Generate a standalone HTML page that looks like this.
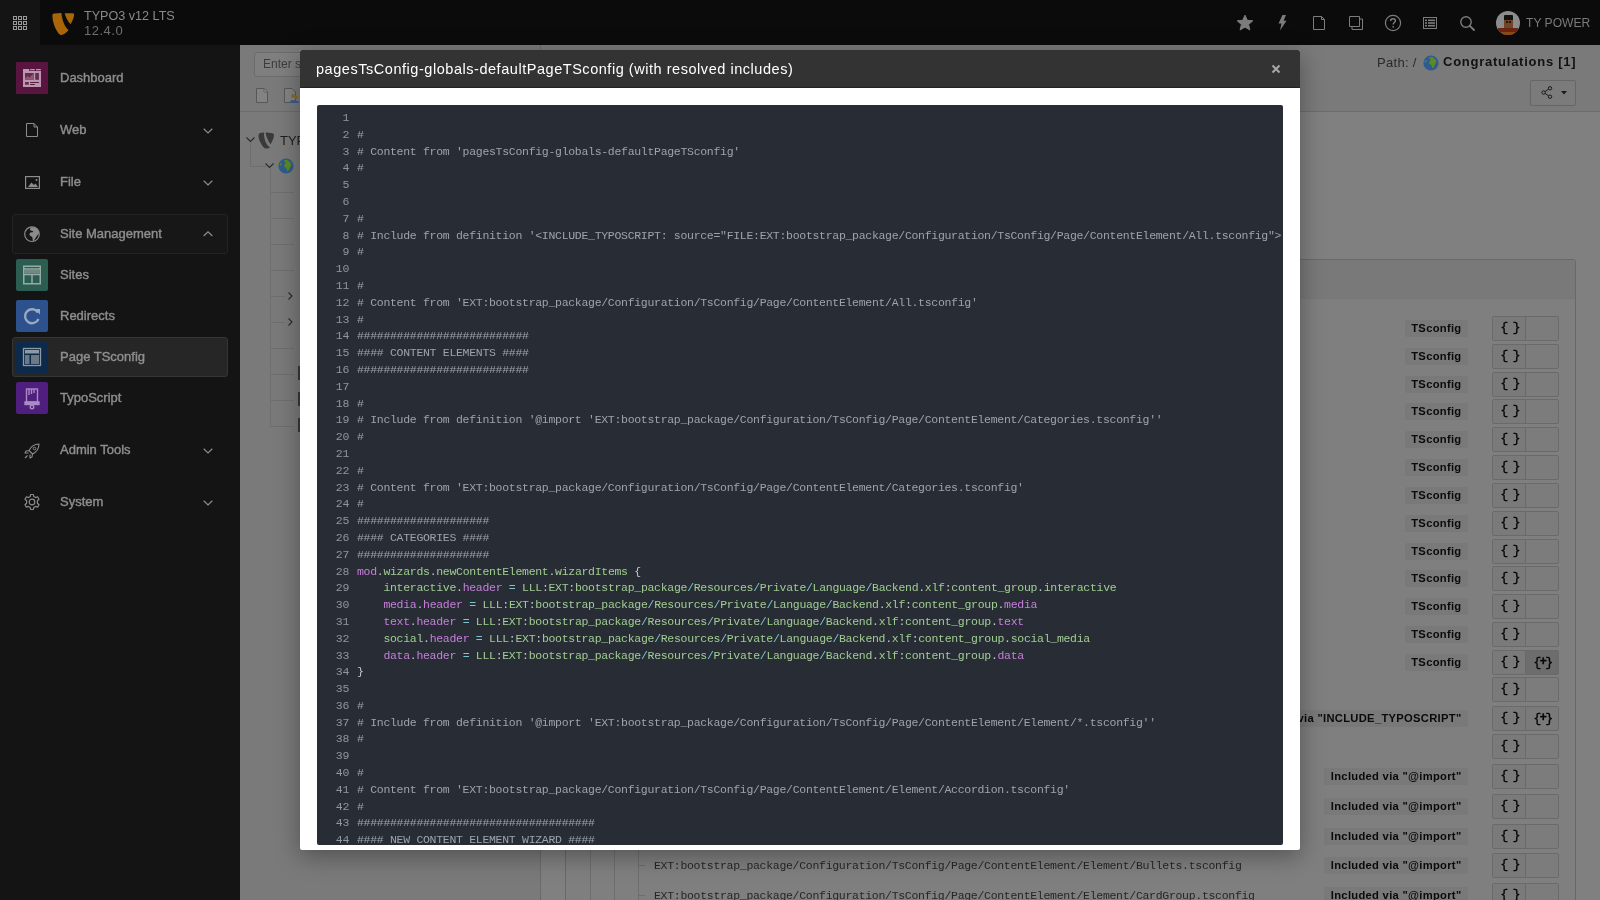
<!DOCTYPE html><html><head><meta charset="utf-8"><style>
*{box-sizing:border-box;margin:0;padding:0}
html,body{width:1600px;height:900px;overflow:hidden;font-family:"Liberation Sans",sans-serif;background:#808080}
.abs{position:absolute}
#topbar{position:absolute;left:0;top:0;width:1600px;height:45px;background:#0b0b0b}
#tb-toggle{position:absolute;left:0;top:0;width:40px;height:45px;background:#141414}
#sidebar{position:absolute;left:0;top:45px;width:240px;height:855px;background:#141414}
#content{position:absolute;left:240px;top:45px;width:1360px;height:855px;background:#808080;overflow:hidden}
.side-t{position:absolute;left:60px;margin-top:1px;color:#8e8e8e;font-size:13px;font-weight:normal;-webkit-text-stroke:0.4px #8e8e8e;white-space:nowrap;margin-top:0px}
.chev{position:absolute;left:203px;width:9px;height:5px}
.micon{position:absolute;left:16px;width:32px;height:32px;border-radius:2px}
#modal{position:absolute;left:300px;top:50px;width:1000px;height:800px;background:#fff;border-radius:2px;box-shadow:0 6px 24px rgba(0,0,0,.35);overflow:hidden}
#mhead{position:absolute;left:0;top:0;width:1000px;height:38px;background:#333;border-bottom:1px solid #222}
#mtitle{position:absolute;left:16px;top:11px;color:#fff;font-size:14.5px;letter-spacing:0.54px;white-space:nowrap}
#code{position:absolute;left:17px;top:55px;width:966px;height:740px;background:#282c34;border-radius:2px;overflow:hidden}
#code pre{position:absolute;left:0;top:5px;will-change:transform;font-family:"Liberation Mono",monospace;font-size:11.5px;letter-spacing:-0.3px;line-height:16.8px;color:#9ca3ae;white-space:pre}
.ln{display:inline-block;width:32px;text-align:right;color:#8f96a0;margin-right:8px;letter-spacing:-0.3px}
.k{color:#c77fdc}.g{color:#a0cd92}.c{color:#7cc6cf}.p{color:#c3c8d0}
</style></head><body><div id="root" style="position:absolute;left:0;top:0;width:1600px;height:900px;will-change:transform"><div id="topbar"><div id="tb-toggle"></div><svg class="abs" style="left:0;top:0" width="40" height="45"><rect x="13.5" y="16.5" width="3" height="3" fill="none" stroke="#999" stroke-width="1"/><rect x="18.5" y="16.5" width="3" height="3" fill="none" stroke="#999" stroke-width="1"/><rect x="23.5" y="16.5" width="3" height="3" fill="none" stroke="#999" stroke-width="1"/><rect x="13.5" y="21.5" width="3" height="3" fill="none" stroke="#999" stroke-width="1"/><rect x="18.5" y="21.5" width="3" height="3" fill="none" stroke="#999" stroke-width="1"/><rect x="23.5" y="21.5" width="3" height="3" fill="none" stroke="#999" stroke-width="1"/><rect x="13.5" y="26.5" width="3" height="3" fill="none" stroke="#999" stroke-width="1"/><rect x="18.5" y="26.5" width="3" height="3" fill="none" stroke="#999" stroke-width="1"/><rect x="23.5" y="26.5" width="3" height="3" fill="none" stroke="#999" stroke-width="1"/></svg><svg class="abs" style="left:50px;top:11px" width="26" height="26" viewBox="0 0 26 26"><path d="M2.4 4.2 C2.4 3 3 2.6 4.2 2.5 L11.4 2 C12 8.5 14.2 15 18.5 19.3 C16.4 21.8 13.6 24 11.4 24 C8 24 2.3 13 2.4 4.2 Z M14.4 2 L22.8 2.3 C23.8 2.4 24.1 2.9 24.1 3.8 C24.1 6.6 22.2 10.6 20.6 13.2 C17.2 9.6 15.3 5.2 14.6 2 Z" fill="#a86609"/></svg><div class="abs" style="left:84px;top:9px;color:#8a8a8a;font-size:12.6px;white-space:nowrap">TYPO3 v12 LTS</div><div class="abs" style="left:84px;top:23px;color:#6e6e6e;font-size:13px;letter-spacing:0.5px;white-space:nowrap">12.4.0</div><svg class="abs" style="left:1236px;top:14px" width="18" height="18" viewBox="0 0 18 18"><path d="M9 1.2 L11.3 6.3 L16.8 6.8 L12.6 10.5 L13.9 16 L9 13.1 L4.1 16 L5.4 10.5 L1.2 6.8 L6.7 6.3 Z" fill="#7c7c7c" stroke="#7c7c7c" stroke-width="1" stroke-linejoin="round"/></svg><svg class="abs" style="left:1275px;top:14px" width="14" height="18" viewBox="0 0 14 18"><path d="M7.5 1 L11 1 L8.6 6.8 L11.5 6.8 L5 16.5 L6.5 9.5 L3.5 9.5 Z" fill="#7c7c7c"/></svg><svg class="abs" style="left:1312px;top:15px" width="14" height="16" viewBox="0 0 14 16"><path d="M1.5 1.5 H9.5 L12.5 4.5 V14.5 H1.5 Z M9.5 1.5 V4.5 H12.5" fill="none" stroke="#7c7c7c" stroke-width="1"/></svg><svg class="abs" style="left:1348px;top:15px" width="16" height="16" viewBox="0 0 16 16"><path d="M1.5 1.5 H11.5 V11.5 H1.5 Z M4 11.5 V14.5 H14.5 V4 H11.5" fill="none" stroke="#7c7c7c" stroke-width="1"/><path d="M2.5 1.5 V2" stroke="#7c7c7c"/></svg><svg class="abs" style="left:1384px;top:14px" width="18" height="18" viewBox="0 0 18 18"><circle cx="9" cy="9" r="7.6" fill="none" stroke="#7c7c7c" stroke-width="1.2"/><path d="M6.6 7 C6.6 5.5 7.6 4.7 9 4.7 C10.5 4.7 11.4 5.6 11.4 6.8 C11.4 8.4 9.2 8.6 9.2 10.4" fill="none" stroke="#7c7c7c" stroke-width="1.5"/><circle cx="9.2" cy="12.8" r="0.9" fill="#7c7c7c"/></svg><svg class="abs" style="left:1422px;top:16px" width="16" height="14" viewBox="0 0 16 14"><rect x="1.5" y="1.5" width="13" height="11" fill="none" stroke="#7c7c7c" stroke-width="1"/><rect x="3" y="3.5" width="2" height="1.6" fill="#7c7c7c"/><rect x="6" y="3.5" width="7" height="1.6" fill="#7c7c7c"/><rect x="3" y="6.2" width="2" height="1.6" fill="#7c7c7c"/><rect x="6" y="6.2" width="7" height="1.6" fill="#7c7c7c"/><rect x="3" y="8.9" width="2" height="1.6" fill="#7c7c7c"/><rect x="6" y="8.9" width="7" height="1.6" fill="#7c7c7c"/></svg><svg class="abs" style="left:1459px;top:15px" width="17" height="17" viewBox="0 0 17 17"><circle cx="7" cy="7" r="5.2" fill="none" stroke="#7c7c7c" stroke-width="1.4"/><path d="M10.8 10.8 L15 15" stroke="#7c7c7c" stroke-width="1.8" stroke-linecap="round"/></svg><div class="abs" style="left:1496px;top:11px;width:24px;height:24px;border-radius:50%;background:#8c8c8c;overflow:hidden"><div class="abs" style="left:7.5px;top:8px;width:9px;height:11px;background:#6e4526"></div><div class="abs" style="left:7.5px;top:3.5px;width:9px;height:5px;background:#101010;border-radius:1px 1px 0 0"></div><div class="abs" style="left:9.5px;top:10px;width:2px;height:1.5px;background:#2a120a"></div><div class="abs" style="left:12.5px;top:10px;width:2px;height:1.5px;background:#2a120a"></div><div class="abs" style="left:2px;top:17px;width:20px;height:8px;background:#6a2410"></div><div class="abs" style="left:4px;top:21px;width:16px;height:4px;background:#8a4a18"></div></div><div class="abs" style="left:1526px;top:16px;color:#7a7a7a;font-size:12.1px;white-space:nowrap">TY POWER</div></div><div id="sidebar"><div class="micon" style="top:17px;background:#5a1440;border-radius:1px"><svg width="32" height="32" viewBox="0 0 32 32"><path d="M7 7 H13.2 V9 H25 V25 H7 Z" fill="#b89ab0"/><rect x="14.2" y="7" width="4.6" height="1.3" fill="#b89ab0"/><rect x="20" y="7" width="4.8" height="1.3" fill="#b89ab0"/><rect x="9" y="11" width="8.7" height="6.8" fill="#6a2a50"/><path d="M9 16.5 L11.5 14 L13.5 15.5 L17.2 12 V17.8 H9Z" fill="#8a5a78"/><rect x="19.2" y="11" width="3.7" height="6.8" fill="#6a2a50"/><rect x="9" y="20" width="3.8" height="2.7" fill="#6a2a50"/><rect x="14.2" y="20" width="8.7" height="1" fill="#5a1a40"/><rect x="14.2" y="22" width="4.6" height="1" fill="#5a1a40"/></svg></div><div class="side-t" style="top:25px">Dashboard</div><svg class="abs" style="left:25px;top:77px" width="14" height="16" viewBox="0 0 14 16"><path d="M1.5 1.5 H9 L12.5 5 V14.5 H1.5 Z M9 1.5 V5 H12.5" fill="none" stroke="#8c8c8c" stroke-width="1"/></svg><div class="side-t" style="top:77px">Web</div><svg class="chev" style="top:83px;width:10px;height:6px" width="10" height="6" viewBox="0 0 10 6"><path d="M0.7 0.8 L5 5 L9.3 0.8" fill="none" stroke="#8c8c8c" stroke-width="1.2"/></svg><svg class="abs" style="left:25px;top:131px" width="16" height="14" viewBox="0 0 16 14"><rect x="0.6" y="0.6" width="13.8" height="11.8" fill="none" stroke="#8c8c8c" stroke-width="1.2"/><path d="M3 11 L6.5 6.5 L9 9 L10.5 7.5 L13 11 Z" fill="#8c8c8c"/><circle cx="11.5" cy="4" r="1" fill="#8c8c8c"/></svg><div class="side-t" style="top:129px">File</div><svg class="chev" style="top:135px;width:10px;height:6px" width="10" height="6" viewBox="0 0 10 6"><path d="M0.7 0.8 L5 5 L9.3 0.8" fill="none" stroke="#8c8c8c" stroke-width="1.2"/></svg><div class="abs" style="left:12px;top:169px;width:216px;height:40px;background:#171717;border:1px solid #232323;border-radius:3px"></div><svg class="abs" style="left:24px;top:181px" width="16" height="17" viewBox="0 0 16 17"><circle cx="8" cy="8.2" r="7.3" fill="none" stroke="#8c8c8c" stroke-width="1.2"/><path d="M7.2 1.2 C9.5 1 12 1.6 13.8 3.5 C15.2 5 15.3 7 14.6 8.3 C13.5 8.8 13 10 12.2 11 C11.3 12.3 10.5 13.8 9.6 15.4 C8.8 15.2 8.6 14 8.6 12.5 C8.6 11.2 7.8 10.6 6.8 10.2 C5.8 9.8 5.2 8.8 5.6 7.6 C6 6.6 7 6.3 8 6.3 C9 6.3 9.5 5.8 9 5.2 C8.4 4.6 7 4.8 6.2 4.2 C5.6 3.6 6 2.2 7.2 1.2Z" fill="#8c8c8c"/></svg><div class="side-t" style="top:181px">Site Management</div><svg class="chev" style="top:186px;width:10px;height:6px" width="10" height="6" viewBox="0 0 10 6"><path d="M0.7 5 L5 0.8 L9.3 5" fill="none" stroke="#8c8c8c" stroke-width="1.2"/></svg><div class="micon" style="top:214px;background:#2b5e50"><svg width="32" height="32" viewBox="0 0 32 32"><g fill="none" stroke="#97aaa3" stroke-width="1.5"><rect x="7.75" y="7.25" width="16.5" height="17.5"/><path d="M7.75 10 H24.25 M7.75 15.5 H24.25 M16 15.5 V24.75"/></g><rect x="8.5" y="11" width="15" height="3.6" fill="#6f8a82"/></svg></div><div class="side-t" style="top:222px">Sites</div><div class="micon" style="top:255px;background:#2d518c"><svg width="32" height="32" viewBox="0 0 32 32"><path d="M22 12.5 A7 7 0 1 0 22.5 19" fill="none" stroke="#9aa9c2" stroke-width="2.4"/><path d="M18.5 9 L24 9 L24 14.5 Z" fill="#9aa9c2"/></svg></div><div class="side-t" style="top:263px">Redirects</div><div class="abs" style="left:12px;top:292px;width:216px;height:40px;background:#262626;border:1px solid #353535;border-radius:3px"></div><div class="micon" style="top:296px;background:#0e2a4a"><svg width="32" height="32" viewBox="0 0 32 32"><rect x="7.5" y="7.5" width="17" height="17" fill="none" stroke="#8c9aa8" stroke-width="1.3"/><rect x="9" y="9" width="14" height="3.5" fill="#8c9aa8"/><rect x="9" y="14" width="4.5" height="9" fill="#6c7a88"/><rect x="15" y="14" width="8" height="9" fill="#6c7a88"/></svg></div><div class="side-t" style="top:304px">Page TSconfig</div><div class="micon" style="top:337px;background:#4f1e7e"><svg width="32" height="32" viewBox="0 0 32 32"><g fill="none" stroke="#a98cc0" stroke-width="1.4"><rect x="10.5" y="7" width="11" height="13"/><path d="M13 7 V13 M15.5 7 V12 M18 7 V11"/><rect x="9" y="20" width="14" height="2.5" fill="#a98cc0"/><circle cx="16" cy="25" r="1.8"/></g></svg></div><div class="side-t" style="top:345px">TypoScript</div><svg class="abs" style="left:23px;top:396.5px" width="18" height="18" viewBox="0 0 18 18"><path d="M16 2 C12 2 8 4.5 6 8.5 L9.5 12 C13.5 10 16 6 16 2Z M6 8.5 L3 9 L2 11 L5.5 11 M9.5 12 L9 15 L7 16 L7 12.5 M4.5 13.5 L2 16" fill="none" stroke="#8c8c8c" stroke-width="1.1" stroke-linejoin="round"/><circle cx="11.5" cy="6.5" r="1.3" fill="none" stroke="#8c8c8c" stroke-width="1"/></svg><div class="side-t" style="top:397px">Admin Tools</div><svg class="chev" style="top:403px;width:10px;height:6px" width="10" height="6" viewBox="0 0 10 6"><path d="M0.7 0.8 L5 5 L9.3 0.8" fill="none" stroke="#8c8c8c" stroke-width="1.2"/></svg><svg class="abs" style="left:23px;top:448px" width="18" height="18" viewBox="0 0 18 18"><circle cx="9" cy="9" r="2.8" fill="none" stroke="#8c8c8c" stroke-width="1.2"/><path d="M7.6 1.5 H10.4 L10.8 3.6 L12.6 4.6 L14.6 3.8 L16 6.3 L14.4 7.7 V10.3 L16 11.7 L14.6 14.2 L12.6 13.4 L10.8 14.4 L10.4 16.5 H7.6 L7.2 14.4 L5.4 13.4 L3.4 14.2 L2 11.7 L3.6 10.3 V7.7 L2 6.3 L3.4 3.8 L5.4 4.6 L7.2 3.6 Z" fill="none" stroke="#8c8c8c" stroke-width="1.2" stroke-linejoin="round"/></svg><div class="side-t" style="top:449px">System</div><svg class="chev" style="top:455px;width:10px;height:6px" width="10" height="6" viewBox="0 0 10 6"><path d="M0.7 0.8 L5 5 L9.3 0.8" fill="none" stroke="#8c8c8c" stroke-width="1.2"/></svg></div><div id="content"><div class="abs" style="left:0;top:0;width:300px;height:855px;background:#7a7a7a"></div><div class="abs" style="left:0;top:0;width:1360px;height:67px;background:#7a7a7a;border-bottom:1px solid #6c6c6c"></div><div class="abs" style="left:14px;top:7px;width:200px;height:25px;background:#7f7f7f;border:1px solid #6c6c6c;border-radius:3px"></div><div class="abs" style="left:23px;top:12px;color:#3c3c3c;font-size:12px;white-space:nowrap">Enter search term</div><svg class="abs" style="left:15px;top:42px" width="14" height="17" viewBox="0 0 14 17"><path d="M1.5 1.5 H9 L12.5 5 V15.5 H1.5 Z" fill="#838383" stroke="#575757" stroke-width="1"/><path d="M9 1.5 V5 H12.5 Z" fill="#a0a0a0" stroke="#575757" stroke-width="0.8"/></svg><svg class="abs" style="left:43px;top:42px" width="17" height="17" viewBox="0 0 17 17"><path d="M1.5 1.5 H9 L12.5 5 V15.5 H1.5 Z" fill="#838383" stroke="#575757" stroke-width="1"/><circle cx="10" cy="9" r="2" fill="#8a6a2a"/><path d="M6.5 16 C6.5 12 13.5 12 13.5 16 Z" fill="#3a5f8a"/><circle cx="13" cy="10" r="1.8" fill="#8a6a2a"/><path d="M10.5 16 C10.5 13 16 13 16 16 Z" fill="#3a5f8a"/></svg><svg class="abs" style="left:6px;top:91px" width="9" height="8" viewBox="0 0 9 8"><path d="M0.5 1.5 L4.5 5.5 L8.5 1.5" fill="none" stroke="#2a2a2a" stroke-width="1.1"/></svg><svg class="abs" style="left:17px;top:86px" width="18" height="18" viewBox="0 0 18 18"><path d="M1.5 5 C1.5 2.8 2.3 2.2 4.5 1.8 L7 1.5 C6.8 5 7.5 9.5 9.7 13 C10.8 14.7 11.9 15.7 13 16.4 C11.5 17.2 10.2 17.6 9 17.6 C5.5 17.6 1.5 8.5 1.5 5Z M8.4 1.5 C9.7 1.5 13.6 1.7 15.4 2.2 C16.8 2.7 17 3.3 17 4.3 C17 6.5 15.6 10 13.6 13.3 C11.3 10.8 9.3 5.8 8.4 1.5Z" fill="#3a3a3a"/></svg><div class="abs" style="left:40px;top:88px;color:#1e1e1e;font-size:13px;white-space:nowrap">TYPO3</div><div class="abs" style="left:10px;top:98px;width:1px;height:23px;background:#6e6e6e"></div><div class="abs" style="left:10px;top:121px;width:16px;height:1px;background:#6e6e6e"></div><svg class="abs" style="left:25px;top:117px" width="9" height="8" viewBox="0 0 9 8"><path d="M0.5 1.5 L4.5 5.5 L8.5 1.5" fill="none" stroke="#2a2a2a" stroke-width="1.1"/></svg><svg class="abs" style="left:38px;top:113px" width="16" height="16" viewBox="0 0 16 16"><circle cx="8" cy="8" r="7.6" fill="#2f5c8e"/><path d="M6.5 2.2 C8.5 1.8 10.5 2.5 11 3.5 C12.3 4 13.5 5.5 13.2 7 C12.8 8.5 12 9 11.5 10.5 C11 12 10 13.5 9.2 13.2 C8.8 12 9 10.5 8 9.8 C6.8 9.2 5.8 8.5 6.2 7.2 C6.5 6 7.8 5.8 7.5 4.8 C7.2 4 6 3.2 6.5 2.2Z" fill="#5f8a1e"/><path d="M2 5.5 C3 5 3.8 5.8 3.5 6.8 C3.2 7.5 2.4 7.6 1.8 7.2Z" fill="#5f8a1e"/></svg><div class="abs" style="left:30px;top:123px;width:1px;height:259px;background:#6e6e6e"></div><div class="abs" style="left:30px;top:147px;width:24px;height:1px;background:#6e6e6e"></div><div class="abs" style="left:30px;top:173px;width:24px;height:1px;background:#6e6e6e"></div><div class="abs" style="left:30px;top:199px;width:24px;height:1px;background:#6e6e6e"></div><div class="abs" style="left:30px;top:225px;width:24px;height:1px;background:#6e6e6e"></div><svg class="abs" style="left:47px;top:247px" width="9" height="8" viewBox="0 0 9 8"><path d="M1.5 0.5 L5 4 L1.5 7.5" fill="none" stroke="#2a2a2a" stroke-width="1.1"/></svg><div class="abs" style="left:30px;top:251px;width:15px;height:1px;background:#6e6e6e"></div><svg class="abs" style="left:47px;top:273px" width="9" height="8" viewBox="0 0 9 8"><path d="M1.5 0.5 L5 4 L1.5 7.5" fill="none" stroke="#2a2a2a" stroke-width="1.1"/></svg><div class="abs" style="left:30px;top:277px;width:15px;height:1px;background:#6e6e6e"></div><div class="abs" style="left:30px;top:303px;width:24px;height:1px;background:#6e6e6e"></div><div class="abs" style="left:30px;top:329px;width:24px;height:1px;background:#6e6e6e"></div><div class="abs" style="left:30px;top:355px;width:24px;height:1px;background:#6e6e6e"></div><div class="abs" style="left:30px;top:381px;width:24px;height:1px;background:#6e6e6e"></div><div class="abs" style="left:58px;top:321px;width:2px;height:14px;background:#3a3a3a"></div><div class="abs" style="left:58px;top:347px;width:2px;height:14px;background:#3a3a3a"></div><div class="abs" style="left:58px;top:373px;width:2px;height:14px;background:#3a3a3a"></div><div class="abs" style="left:1137px;top:10px;color:#2a2a2a;font-size:13px;white-space:nowrap;letter-spacing:0.3px">Path: /</div><svg class="abs" style="left:1183px;top:10px" width="16" height="16" viewBox="0 0 16 16"><circle cx="8" cy="8" r="7.6" fill="#2f5c8e"/><path d="M6.5 2.2 C8.5 1.8 10.5 2.5 11 3.5 C12.3 4 13.5 5.5 13.2 7 C12.8 8.5 12 9 11.5 10.5 C11 12 10 13.5 9.2 13.2 C8.8 12 9 10.5 8 9.8 C6.8 9.2 5.8 8.5 6.2 7.2 C6.5 6 7.8 5.8 7.5 4.8 C7.2 4 6 3.2 6.5 2.2Z" fill="#5f8a1e"/><path d="M2 5.5 C3 5 3.8 5.8 3.5 6.8 C3.2 7.5 2.4 7.6 1.8 7.2Z" fill="#5f8a1e"/></svg><div class="abs" style="left:1203px;top:9px;color:#111;font-size:13px;font-weight:bold;white-space:nowrap;letter-spacing:0.75px">Congratulations [1]</div><div class="abs" style="left:1290px;top:35px;width:46px;height:26px;background:#7b7b7b;border:1px solid #666;border-radius:2px"></div><svg class="abs" style="left:1301px;top:41px" width="12" height="13" viewBox="0 0 12 13"><circle cx="9" cy="2.3" r="1.7" fill="none" stroke="#1a1a1a" stroke-width="1"/><circle cx="2.6" cy="6.5" r="1.7" fill="none" stroke="#1a1a1a" stroke-width="1"/><circle cx="9" cy="10.7" r="1.7" fill="none" stroke="#1a1a1a" stroke-width="1"/><path d="M4.1 5.6 L7.5 3.2 M4.1 7.4 L7.5 9.8" stroke="#1a1a1a" stroke-width="1"/></svg><svg class="abs" style="left:1321px;top:46px" width="6" height="4" viewBox="0 0 6 4"><path d="M0 0 H6 L3 3.5Z" fill="#1a1a1a"/></svg><div class="abs" style="left:300px;top:0;width:1px;height:855px;background:#6a6a6a"></div><div class="abs" style="left:325px;top:214px;width:1011px;height:700px;background:#7f7f7f;border:1px solid #686868;border-radius:3px;overflow:hidden"><div class="abs" style="left:0;top:0;width:1011px;height:39px;background:#797979;border-bottom:1px solid #777"></div></div><div class="abs" style="right:132px;top:275.0px;height:17px;padding:0 6.5px;background:#797979;border-radius:2px;color:#0a0a0a;font-size:11.2px;font-weight:bold;line-height:17px;white-space:nowrap;letter-spacing:0.3px">TSconfig</div><div class="abs" style="left:1252px;top:271.0px;width:67px;height:25px;border:1px solid #6a6a6a;border-radius:2px;background:#7c7c7c;overflow:hidden"><div class="abs" style="left:0;top:0;width:33px;height:23px;background:#7a7a7a;border-right:1px solid #6a6a6a"></div><div class="abs" style="left:0;top:0;width:33px;height:23px;text-align:center;line-height:22px;font-family:'Liberation Mono',monospace;font-size:13.5px;font-weight:normal;-webkit-text-stroke:0.3px #050505;color:#050505;letter-spacing:-2px">{ }</div></div><div class="abs" style="right:132px;top:303.0px;height:17px;padding:0 6.5px;background:#797979;border-radius:2px;color:#0a0a0a;font-size:11.2px;font-weight:bold;line-height:17px;white-space:nowrap;letter-spacing:0.3px">TSconfig</div><div class="abs" style="left:1252px;top:299.0px;width:67px;height:25px;border:1px solid #6a6a6a;border-radius:2px;background:#7c7c7c;overflow:hidden"><div class="abs" style="left:0;top:0;width:33px;height:23px;background:#7a7a7a;border-right:1px solid #6a6a6a"></div><div class="abs" style="left:0;top:0;width:33px;height:23px;text-align:center;line-height:22px;font-family:'Liberation Mono',monospace;font-size:13.5px;font-weight:normal;-webkit-text-stroke:0.3px #050505;color:#050505;letter-spacing:-2px">{ }</div></div><div class="abs" style="right:132px;top:330.5px;height:17px;padding:0 6.5px;background:#797979;border-radius:2px;color:#0a0a0a;font-size:11.2px;font-weight:bold;line-height:17px;white-space:nowrap;letter-spacing:0.3px">TSconfig</div><div class="abs" style="left:1252px;top:326.5px;width:67px;height:25px;border:1px solid #6a6a6a;border-radius:2px;background:#7c7c7c;overflow:hidden"><div class="abs" style="left:0;top:0;width:33px;height:23px;background:#7a7a7a;border-right:1px solid #6a6a6a"></div><div class="abs" style="left:0;top:0;width:33px;height:23px;text-align:center;line-height:22px;font-family:'Liberation Mono',monospace;font-size:13.5px;font-weight:normal;-webkit-text-stroke:0.3px #050505;color:#050505;letter-spacing:-2px">{ }</div></div><div class="abs" style="right:132px;top:358.3px;height:17px;padding:0 6.5px;background:#797979;border-radius:2px;color:#0a0a0a;font-size:11.2px;font-weight:bold;line-height:17px;white-space:nowrap;letter-spacing:0.3px">TSconfig</div><div class="abs" style="left:1252px;top:354.3px;width:67px;height:25px;border:1px solid #6a6a6a;border-radius:2px;background:#7c7c7c;overflow:hidden"><div class="abs" style="left:0;top:0;width:33px;height:23px;background:#7a7a7a;border-right:1px solid #6a6a6a"></div><div class="abs" style="left:0;top:0;width:33px;height:23px;text-align:center;line-height:22px;font-family:'Liberation Mono',monospace;font-size:13.5px;font-weight:normal;-webkit-text-stroke:0.3px #050505;color:#050505;letter-spacing:-2px">{ }</div></div><div class="abs" style="right:132px;top:386.3px;height:17px;padding:0 6.5px;background:#797979;border-radius:2px;color:#0a0a0a;font-size:11.2px;font-weight:bold;line-height:17px;white-space:nowrap;letter-spacing:0.3px">TSconfig</div><div class="abs" style="left:1252px;top:382.3px;width:67px;height:25px;border:1px solid #6a6a6a;border-radius:2px;background:#7c7c7c;overflow:hidden"><div class="abs" style="left:0;top:0;width:33px;height:23px;background:#7a7a7a;border-right:1px solid #6a6a6a"></div><div class="abs" style="left:0;top:0;width:33px;height:23px;text-align:center;line-height:22px;font-family:'Liberation Mono',monospace;font-size:13.5px;font-weight:normal;-webkit-text-stroke:0.3px #050505;color:#050505;letter-spacing:-2px">{ }</div></div><div class="abs" style="right:132px;top:414.0px;height:17px;padding:0 6.5px;background:#797979;border-radius:2px;color:#0a0a0a;font-size:11.2px;font-weight:bold;line-height:17px;white-space:nowrap;letter-spacing:0.3px">TSconfig</div><div class="abs" style="left:1252px;top:410.0px;width:67px;height:25px;border:1px solid #6a6a6a;border-radius:2px;background:#7c7c7c;overflow:hidden"><div class="abs" style="left:0;top:0;width:33px;height:23px;background:#7a7a7a;border-right:1px solid #6a6a6a"></div><div class="abs" style="left:0;top:0;width:33px;height:23px;text-align:center;line-height:22px;font-family:'Liberation Mono',monospace;font-size:13.5px;font-weight:normal;-webkit-text-stroke:0.3px #050505;color:#050505;letter-spacing:-2px">{ }</div></div><div class="abs" style="right:132px;top:441.8px;height:17px;padding:0 6.5px;background:#797979;border-radius:2px;color:#0a0a0a;font-size:11.2px;font-weight:bold;line-height:17px;white-space:nowrap;letter-spacing:0.3px">TSconfig</div><div class="abs" style="left:1252px;top:437.8px;width:67px;height:25px;border:1px solid #6a6a6a;border-radius:2px;background:#7c7c7c;overflow:hidden"><div class="abs" style="left:0;top:0;width:33px;height:23px;background:#7a7a7a;border-right:1px solid #6a6a6a"></div><div class="abs" style="left:0;top:0;width:33px;height:23px;text-align:center;line-height:22px;font-family:'Liberation Mono',monospace;font-size:13.5px;font-weight:normal;-webkit-text-stroke:0.3px #050505;color:#050505;letter-spacing:-2px">{ }</div></div><div class="abs" style="right:132px;top:469.9px;height:17px;padding:0 6.5px;background:#797979;border-radius:2px;color:#0a0a0a;font-size:11.2px;font-weight:bold;line-height:17px;white-space:nowrap;letter-spacing:0.3px">TSconfig</div><div class="abs" style="left:1252px;top:465.9px;width:67px;height:25px;border:1px solid #6a6a6a;border-radius:2px;background:#7c7c7c;overflow:hidden"><div class="abs" style="left:0;top:0;width:33px;height:23px;background:#7a7a7a;border-right:1px solid #6a6a6a"></div><div class="abs" style="left:0;top:0;width:33px;height:23px;text-align:center;line-height:22px;font-family:'Liberation Mono',monospace;font-size:13.5px;font-weight:normal;-webkit-text-stroke:0.3px #050505;color:#050505;letter-spacing:-2px">{ }</div></div><div class="abs" style="right:132px;top:497.6px;height:17px;padding:0 6.5px;background:#797979;border-radius:2px;color:#0a0a0a;font-size:11.2px;font-weight:bold;line-height:17px;white-space:nowrap;letter-spacing:0.3px">TSconfig</div><div class="abs" style="left:1252px;top:493.6px;width:67px;height:25px;border:1px solid #6a6a6a;border-radius:2px;background:#7c7c7c;overflow:hidden"><div class="abs" style="left:0;top:0;width:33px;height:23px;background:#7a7a7a;border-right:1px solid #6a6a6a"></div><div class="abs" style="left:0;top:0;width:33px;height:23px;text-align:center;line-height:22px;font-family:'Liberation Mono',monospace;font-size:13.5px;font-weight:normal;-webkit-text-stroke:0.3px #050505;color:#050505;letter-spacing:-2px">{ }</div></div><div class="abs" style="right:132px;top:525.4px;height:17px;padding:0 6.5px;background:#797979;border-radius:2px;color:#0a0a0a;font-size:11.2px;font-weight:bold;line-height:17px;white-space:nowrap;letter-spacing:0.3px">TSconfig</div><div class="abs" style="left:1252px;top:521.4px;width:67px;height:25px;border:1px solid #6a6a6a;border-radius:2px;background:#7c7c7c;overflow:hidden"><div class="abs" style="left:0;top:0;width:33px;height:23px;background:#7a7a7a;border-right:1px solid #6a6a6a"></div><div class="abs" style="left:0;top:0;width:33px;height:23px;text-align:center;line-height:22px;font-family:'Liberation Mono',monospace;font-size:13.5px;font-weight:normal;-webkit-text-stroke:0.3px #050505;color:#050505;letter-spacing:-2px">{ }</div></div><div class="abs" style="right:132px;top:553.0px;height:17px;padding:0 6.5px;background:#797979;border-radius:2px;color:#0a0a0a;font-size:11.2px;font-weight:bold;line-height:17px;white-space:nowrap;letter-spacing:0.3px">TSconfig</div><div class="abs" style="left:1252px;top:549.0px;width:67px;height:25px;border:1px solid #6a6a6a;border-radius:2px;background:#7c7c7c;overflow:hidden"><div class="abs" style="left:0;top:0;width:33px;height:23px;background:#7a7a7a;border-right:1px solid #6a6a6a"></div><div class="abs" style="left:0;top:0;width:33px;height:23px;text-align:center;line-height:22px;font-family:'Liberation Mono',monospace;font-size:13.5px;font-weight:normal;-webkit-text-stroke:0.3px #050505;color:#050505;letter-spacing:-2px">{ }</div></div><div class="abs" style="right:132px;top:580.6px;height:17px;padding:0 6.5px;background:#797979;border-radius:2px;color:#0a0a0a;font-size:11.2px;font-weight:bold;line-height:17px;white-space:nowrap;letter-spacing:0.3px">TSconfig</div><div class="abs" style="left:1252px;top:576.6px;width:67px;height:25px;border:1px solid #6a6a6a;border-radius:2px;background:#7c7c7c;overflow:hidden"><div class="abs" style="left:0;top:0;width:33px;height:23px;background:#7a7a7a;border-right:1px solid #6a6a6a"></div><div class="abs" style="left:0;top:0;width:33px;height:23px;text-align:center;line-height:22px;font-family:'Liberation Mono',monospace;font-size:13.5px;font-weight:normal;-webkit-text-stroke:0.3px #050505;color:#050505;letter-spacing:-2px">{ }</div></div><div class="abs" style="right:132px;top:608.5px;height:17px;padding:0 6.5px;background:#797979;border-radius:2px;color:#0a0a0a;font-size:11.2px;font-weight:bold;line-height:17px;white-space:nowrap;letter-spacing:0.3px">TSconfig</div><div class="abs" style="left:1252px;top:604.5px;width:67px;height:25px;border:1px solid #6a6a6a;border-radius:2px;background:#7c7c7c;overflow:hidden"><div class="abs" style="left:0;top:0;width:33px;height:23px;background:#7a7a7a;border-right:1px solid #6a6a6a"></div><div class="abs" style="left:0;top:0;width:33px;height:23px;text-align:center;line-height:22px;font-family:'Liberation Mono',monospace;font-size:13.5px;font-weight:normal;-webkit-text-stroke:0.3px #050505;color:#050505;letter-spacing:-2px">{ }</div><div class="abs" style="left:33px;top:0;width:33px;height:23px;background:#6d6d6d;text-align:center;line-height:22px;font-family:'Liberation Mono',monospace;font-size:13.5px;font-weight:normal;-webkit-text-stroke:0.3px #050505;color:#050505;letter-spacing:-1.5px">{<b style="font-family:'Liberation Sans',sans-serif;font-size:12px;position:relative;top:-1px">+</b>}</div></div><div class="abs" style="left:1252px;top:632.4px;width:67px;height:25px;border:1px solid #6a6a6a;border-radius:2px;background:#7c7c7c;overflow:hidden"><div class="abs" style="left:0;top:0;width:33px;height:23px;background:#7a7a7a;border-right:1px solid #6a6a6a"></div><div class="abs" style="left:0;top:0;width:33px;height:23px;text-align:center;line-height:22px;font-family:'Liberation Mono',monospace;font-size:13.5px;font-weight:normal;-webkit-text-stroke:0.3px #050505;color:#050505;letter-spacing:-2px">{ }</div></div><div class="abs" style="right:132px;top:665.0px;height:17px;padding:0 6.5px;background:#797979;border-radius:2px;color:#0a0a0a;font-size:11.2px;font-weight:bold;line-height:17px;white-space:nowrap;letter-spacing:0.3px">Included via &quot;INCLUDE_TYPOSCRIPT&quot;</div><div class="abs" style="left:1252px;top:661.0px;width:67px;height:25px;border:1px solid #6a6a6a;border-radius:2px;background:#7c7c7c;overflow:hidden"><div class="abs" style="left:0;top:0;width:33px;height:23px;background:#7a7a7a;border-right:1px solid #6a6a6a"></div><div class="abs" style="left:0;top:0;width:33px;height:23px;text-align:center;line-height:22px;font-family:'Liberation Mono',monospace;font-size:13.5px;font-weight:normal;-webkit-text-stroke:0.3px #050505;color:#050505;letter-spacing:-2px">{ }</div><div class="abs" style="left:33px;top:0;width:33px;height:23px;background:#7a7a7a;text-align:center;line-height:22px;font-family:'Liberation Mono',monospace;font-size:13.5px;font-weight:normal;-webkit-text-stroke:0.3px #050505;color:#050505;letter-spacing:-1.5px">{<b style="font-family:'Liberation Sans',sans-serif;font-size:12px;position:relative;top:-1px">+</b>}</div></div><div class="abs" style="left:1252px;top:689.0px;width:67px;height:25px;border:1px solid #6a6a6a;border-radius:2px;background:#7c7c7c;overflow:hidden"><div class="abs" style="left:0;top:0;width:33px;height:23px;background:#7a7a7a;border-right:1px solid #6a6a6a"></div><div class="abs" style="left:0;top:0;width:33px;height:23px;text-align:center;line-height:22px;font-family:'Liberation Mono',monospace;font-size:13.5px;font-weight:normal;-webkit-text-stroke:0.3px #050505;color:#050505;letter-spacing:-2px">{ }</div></div><div class="abs" style="right:132px;top:723.3px;height:17px;padding:0 6.5px;background:#797979;border-radius:2px;color:#0a0a0a;font-size:11.2px;font-weight:bold;line-height:17px;white-space:nowrap;letter-spacing:0.3px">Included via &quot;@import&quot;</div><div class="abs" style="left:1252px;top:719.3px;width:67px;height:25px;border:1px solid #6a6a6a;border-radius:2px;background:#7c7c7c;overflow:hidden"><div class="abs" style="left:0;top:0;width:33px;height:23px;background:#7a7a7a;border-right:1px solid #6a6a6a"></div><div class="abs" style="left:0;top:0;width:33px;height:23px;text-align:center;line-height:22px;font-family:'Liberation Mono',monospace;font-size:13.5px;font-weight:normal;-webkit-text-stroke:0.3px #050505;color:#050505;letter-spacing:-2px">{ }</div></div><div class="abs" style="right:132px;top:753.0px;height:17px;padding:0 6.5px;background:#797979;border-radius:2px;color:#0a0a0a;font-size:11.2px;font-weight:bold;line-height:17px;white-space:nowrap;letter-spacing:0.3px">Included via &quot;@import&quot;</div><div class="abs" style="left:1252px;top:749.0px;width:67px;height:25px;border:1px solid #6a6a6a;border-radius:2px;background:#7c7c7c;overflow:hidden"><div class="abs" style="left:0;top:0;width:33px;height:23px;background:#7a7a7a;border-right:1px solid #6a6a6a"></div><div class="abs" style="left:0;top:0;width:33px;height:23px;text-align:center;line-height:22px;font-family:'Liberation Mono',monospace;font-size:13.5px;font-weight:normal;-webkit-text-stroke:0.3px #050505;color:#050505;letter-spacing:-2px">{ }</div></div><div class="abs" style="right:132px;top:782.6px;height:17px;padding:0 6.5px;background:#797979;border-radius:2px;color:#0a0a0a;font-size:11.2px;font-weight:bold;line-height:17px;white-space:nowrap;letter-spacing:0.3px">Included via &quot;@import&quot;</div><div class="abs" style="left:1252px;top:778.6px;width:67px;height:25px;border:1px solid #6a6a6a;border-radius:2px;background:#7c7c7c;overflow:hidden"><div class="abs" style="left:0;top:0;width:33px;height:23px;background:#7a7a7a;border-right:1px solid #6a6a6a"></div><div class="abs" style="left:0;top:0;width:33px;height:23px;text-align:center;line-height:22px;font-family:'Liberation Mono',monospace;font-size:13.5px;font-weight:normal;-webkit-text-stroke:0.3px #050505;color:#050505;letter-spacing:-2px">{ }</div></div><div class="abs" style="right:132px;top:812.4px;height:17px;padding:0 6.5px;background:#797979;border-radius:2px;color:#0a0a0a;font-size:11.2px;font-weight:bold;line-height:17px;white-space:nowrap;letter-spacing:0.3px">Included via &quot;@import&quot;</div><div class="abs" style="left:1252px;top:808.4px;width:67px;height:25px;border:1px solid #6a6a6a;border-radius:2px;background:#7c7c7c;overflow:hidden"><div class="abs" style="left:0;top:0;width:33px;height:23px;background:#7a7a7a;border-right:1px solid #6a6a6a"></div><div class="abs" style="left:0;top:0;width:33px;height:23px;text-align:center;line-height:22px;font-family:'Liberation Mono',monospace;font-size:13.5px;font-weight:normal;-webkit-text-stroke:0.3px #050505;color:#050505;letter-spacing:-2px">{ }</div></div><div class="abs" style="right:132px;top:842.3px;height:17px;padding:0 6.5px;background:#797979;border-radius:2px;color:#0a0a0a;font-size:11.2px;font-weight:bold;line-height:17px;white-space:nowrap;letter-spacing:0.3px">Included via &quot;@import&quot;</div><div class="abs" style="left:1252px;top:838.3px;width:67px;height:25px;border:1px solid #6a6a6a;border-radius:2px;background:#7c7c7c;overflow:hidden"><div class="abs" style="left:0;top:0;width:33px;height:23px;background:#7a7a7a;border-right:1px solid #6a6a6a"></div><div class="abs" style="left:0;top:0;width:33px;height:23px;text-align:center;line-height:22px;font-family:'Liberation Mono',monospace;font-size:13.5px;font-weight:normal;-webkit-text-stroke:0.3px #050505;color:#050505;letter-spacing:-2px">{ }</div></div><div class="abs" style="left:350px;top:790px;width:1px;height:80px;background:#6e6e6e"></div><div class="abs" style="left:374px;top:790px;width:1px;height:80px;background:#6e6e6e"></div><div class="abs" style="left:398px;top:790px;width:1px;height:80px;background:#6e6e6e"></div><div class="abs" style="left:399px;top:820px;width:6px;height:1px;background:#6e6e6e"></div><div class="abs" style="left:414px;top:814px;color:#262626;font-family:'Liberation Mono',monospace;font-size:11.5px;letter-spacing:-0.3px;white-space:nowrap">EXT:bootstrap_package/Configuration/TsConfig/Page/ContentElement/Element/Bullets.tsconfig</div><div class="abs" style="left:399px;top:850px;width:6px;height:1px;background:#6e6e6e"></div><div class="abs" style="left:414px;top:844px;color:#262626;font-family:'Liberation Mono',monospace;font-size:11.5px;letter-spacing:-0.3px;white-space:nowrap">EXT:bootstrap_package/Configuration/TsConfig/Page/ContentElement/Element/CardGroup.tsconfig</div></div><div id="modal"><div id="mhead"><div id="mtitle">pagesTsConfig-globals-defaultPageTSconfig (with resolved includes)</div><svg class="abs" style="left:971px;top:14px" width="10" height="10" viewBox="0 0 10 10"><path d="M1.5 1.5 L8.5 8.5 M8.5 1.5 L1.5 8.5" stroke="#a8a8a8" stroke-width="2"/></svg></div><div id="code"><pre><span class="ln">1</span>
<span class="ln">2</span>#
<span class="ln">3</span># Content from 'pagesTsConfig-globals-defaultPageTSconfig'
<span class="ln">4</span>#
<span class="ln">5</span>
<span class="ln">6</span>
<span class="ln">7</span>#
<span class="ln">8</span># Include from definition '&lt;INCLUDE_TYPOSCRIPT: source="FILE:EXT:bootstrap_package/Configuration/TsConfig/Page/ContentElement/All.tsconfig"&gt;'
<span class="ln">9</span>#
<span class="ln">10</span>
<span class="ln">11</span>#
<span class="ln">12</span># Content from 'EXT:bootstrap_package/Configuration/TsConfig/Page/ContentElement/All.tsconfig'
<span class="ln">13</span>#
<span class="ln">14</span>##########################
<span class="ln">15</span>#### CONTENT ELEMENTS ####
<span class="ln">16</span>##########################
<span class="ln">17</span>
<span class="ln">18</span>#
<span class="ln">19</span># Include from definition '@import 'EXT:bootstrap_package/Configuration/TsConfig/Page/ContentElement/Categories.tsconfig''
<span class="ln">20</span>#
<span class="ln">21</span>
<span class="ln">22</span>#
<span class="ln">23</span># Content from 'EXT:bootstrap_package/Configuration/TsConfig/Page/ContentElement/Categories.tsconfig'
<span class="ln">24</span>#
<span class="ln">25</span>####################
<span class="ln">26</span>#### CATEGORIES ####
<span class="ln">27</span>####################
<span class="ln">28</span><span class="k">mod</span><span class="p">.</span><span class="g">wizards</span><span class="p">.</span><span class="g">newContentElement</span><span class="p">.</span><span class="g">wizardItems</span><span class="p"> {</span>
<span class="ln">29</span>    <span class="g">interactive</span><span class="p">.</span><span class="k">header</span><span class="c"> = </span><span class="g">LLL</span><span class="p">:</span><span class="g">EXT</span><span class="p">:</span><span class="g">bootstrap_package</span><span class="c">/</span><span class="g">Resources</span><span class="c">/</span><span class="g">Private</span><span class="c">/</span><span class="g">Language</span><span class="c">/</span><span class="g">Backend</span><span class="p">.</span><span class="g">xlf</span><span class="p">:</span><span class="g">content_group</span><span class="p">.</span><span class="g">interactive</span>
<span class="ln">30</span>    <span class="k">media</span><span class="p">.</span><span class="k">header</span><span class="c"> = </span><span class="g">LLL</span><span class="p">:</span><span class="g">EXT</span><span class="p">:</span><span class="g">bootstrap_package</span><span class="c">/</span><span class="g">Resources</span><span class="c">/</span><span class="g">Private</span><span class="c">/</span><span class="g">Language</span><span class="c">/</span><span class="g">Backend</span><span class="p">.</span><span class="g">xlf</span><span class="p">:</span><span class="g">content_group</span><span class="p">.</span><span class="k">media</span>
<span class="ln">31</span>    <span class="k">text</span><span class="p">.</span><span class="k">header</span><span class="c"> = </span><span class="g">LLL</span><span class="p">:</span><span class="g">EXT</span><span class="p">:</span><span class="g">bootstrap_package</span><span class="c">/</span><span class="g">Resources</span><span class="c">/</span><span class="g">Private</span><span class="c">/</span><span class="g">Language</span><span class="c">/</span><span class="g">Backend</span><span class="p">.</span><span class="g">xlf</span><span class="p">:</span><span class="g">content_group</span><span class="p">.</span><span class="k">text</span>
<span class="ln">32</span>    <span class="g">social</span><span class="p">.</span><span class="k">header</span><span class="c"> = </span><span class="g">LLL</span><span class="p">:</span><span class="g">EXT</span><span class="p">:</span><span class="g">bootstrap_package</span><span class="c">/</span><span class="g">Resources</span><span class="c">/</span><span class="g">Private</span><span class="c">/</span><span class="g">Language</span><span class="c">/</span><span class="g">Backend</span><span class="p">.</span><span class="g">xlf</span><span class="p">:</span><span class="g">content_group</span><span class="p">.</span><span class="g">social_media</span>
<span class="ln">33</span>    <span class="k">data</span><span class="p">.</span><span class="k">header</span><span class="c"> = </span><span class="g">LLL</span><span class="p">:</span><span class="g">EXT</span><span class="p">:</span><span class="g">bootstrap_package</span><span class="c">/</span><span class="g">Resources</span><span class="c">/</span><span class="g">Private</span><span class="c">/</span><span class="g">Language</span><span class="c">/</span><span class="g">Backend</span><span class="p">.</span><span class="g">xlf</span><span class="p">:</span><span class="g">content_group</span><span class="p">.</span><span class="k">data</span>
<span class="ln">34</span><span class="p">}</span>
<span class="ln">35</span>
<span class="ln">36</span>#
<span class="ln">37</span># Include from definition '@import 'EXT:bootstrap_package/Configuration/TsConfig/Page/ContentElement/Element/*.tsconfig''
<span class="ln">38</span>#
<span class="ln">39</span>
<span class="ln">40</span>#
<span class="ln">41</span># Content from 'EXT:bootstrap_package/Configuration/TsConfig/Page/ContentElement/Element/Accordion.tsconfig'
<span class="ln">42</span>#
<span class="ln">43</span>####################################
<span class="ln">44</span>#### NEW CONTENT ELEMENT WIZARD ####</pre></div></div></div></body></html>
